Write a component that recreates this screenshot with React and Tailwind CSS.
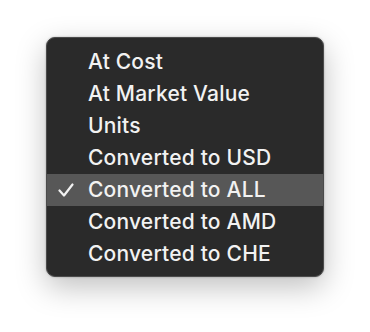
const items = [
  "At Cost",
  "At Market Value",
  "Units",
  "Converted to USD",
  "Converted to ALL",
  "Converted to AMD",
  "Converted to CHE",
];

export default function App() {
  const selected = "Converted to ALL";
  return (
    <div className="w-[370px] h-[332px] bg-white pt-[37px] pl-[46px]" style={{ fontFamily: "Inter, 'Noto Sans', sans-serif" }}>
      <div className="w-[278px] rounded-[9px] bg-[#2a2a2a] border border-[#4b4b4b] pt-[8px] pb-[6px] shadow-[0_10px_30px_rgba(0,0,0,0.25),0_0_2px_rgba(0,0,0,0.3)]">
        {items.map((it) => (
          <div
            key={it}
            className={`flex items-center h-[32px] text-[21px] font-medium tracking-[0.2px] text-[#f2f2f2] ${it === selected ? "bg-[#575757]" : ""}`}
          >
            <span className="w-[41px] flex pl-[11px]">
              {it === selected && (
                <svg width="16" height="14" viewBox="0 0 16 14" fill="none">
                  <path d="M1.5 7.5 L6 12.5 L14.5 1.5" stroke="#f2f2f2" strokeWidth="2.2" strokeLinecap="round" strokeLinejoin="round" />
                </svg>
              )}
            </span>
            <span>{it}</span>
          </div>
        ))}
      </div>
    </div>
  );
}
